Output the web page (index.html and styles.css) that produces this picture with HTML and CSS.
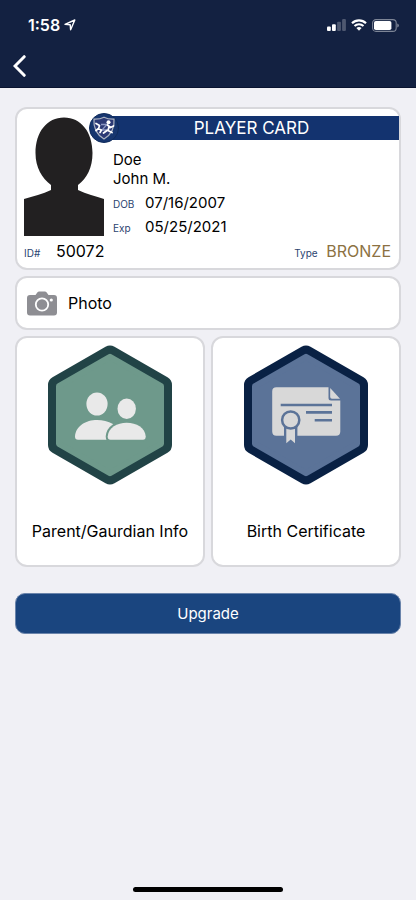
FILE: index.html
```html
<!DOCTYPE html>
<html lang="en">
    <head>
        <meta charset="UTF-8">
        <meta name="viewport" content="width=device-width, initial-scale=1.0">
        <title>Player Card</title>
        <link rel="stylesheet" href="styles.css">
    </head>
    <body>
        <header class="header">
            <div class="status-bar">
                <div class="clock">
                    <span>1:58</span>
                    <svg width="12" height="12" viewBox="0 0 12 12">
                        <path d="M1 5.4 L10.8 1 L6.6 10.8 L6.2 5.8 Z" fill="none" stroke="#fff" stroke-width="1.4" stroke-linejoin="round"/>
                    </svg>
                </div>
                <div class="status-icons">
                    <svg width="19" height="12" viewBox="0 0 19 12" fill="#fff">
                        <rect x="0" y="7.4" width="3.8" height="4.6" rx="1"/>
                        <rect x="5" y="5.2" width="3.8" height="6.8" rx="1"/>
                        <rect x="10.1" y="2.8" width="3.8" height="9.2" rx="1" opacity="0.25"/>
                        <rect x="15.1" y="0" width="3.8" height="12" rx="1" opacity="0.25"/>
                    </svg>
                    <svg width="16" height="12" viewBox="0 0 16 12">
                        <path d="M1 4.3 A10 10 0 0 1 15 4.3" fill="none" stroke="#fff" stroke-width="2.2"/>
                        <path d="M3.5 7 A6.4 6.4 0 0 1 12.5 7" fill="none" stroke="#fff" stroke-width="2"/>
                        <path d="M5.4 9.1 A3.8 3.8 0 0 1 10.6 9.1 L8 11.8 Z" fill="#fff"/>
                    </svg>
                    <svg width="27" height="13" viewBox="0 0 27 13">
                        <rect x="0.6" y="0.6" width="23.6" height="11.8" rx="3.4" fill="none" stroke="#fff" stroke-opacity="0.45" stroke-width="1.1"/>
                        <rect x="2" y="2" width="17.4" height="9" rx="1.8" fill="#fff"/>
                        <path d="M25.3 4.6 V8.6 Q26.8 8 26.8 6.6 Q26.8 5.2 25.3 4.6 Z" fill="#fff" opacity="0.5"/>
                    </svg>
                </div>
            </div>
            <button class="back-btn" aria-label="Back">
                <svg width="13" height="22" viewBox="0 0 13 22">
                    <path d="M11.2 1.7 L2 11 L11.2 20.3" fill="none" stroke="#fff" stroke-width="3" stroke-linecap="round"/>
                </svg>
            </button>
        </header>

        <main class="content">
            <section class="card player-card">
                <div class="player-top">
                    <svg class="player-photo" width="80" height="120" viewBox="0 0 80 120" fill="#222021">
                        <path d="M40 1.500 C57 1.500 68.500 16 68.500 37 C68.500 52 63 62 54 69 V74 C62 78 72 80 80 83 V120 H0 V83 C9 80 19 78 27 74 V69 C18 62 11.500 52 11.500 37 C11.500 16 23 1.500 40 1.500 Z"/>
                    </svg>
                    <div class="player-info">
                        <h1 class="banner">
                            <svg class="badge" width="30" height="30" viewBox="0 0 30 30">
                                <circle cx="15" cy="15" r="14.500" fill="#17366f" stroke="#102c5c"/>
                                <path d="M15 4.200 Q19 6.400 25 6.200 Q26.200 19 15 26 Q3.800 19 5 6.200 Q11 6.400 15 4.200 Z" fill="#2c3a75" stroke="#aeb4c2" stroke-width="1.200"/>
                                <path d="M12 11.500 H18 L13 17 H18" fill="none" stroke="#8d98c4" stroke-width="1.300"/>
                                <circle cx="19.500" cy="9.300" r="2" fill="#fff"/>
                                <path d="M18.500 12 L21.500 14.500 L24.500 13 M20 14 L19 17.500 L23 19.500 M18 17.500 L14.500 20" fill="none" stroke="#fff" stroke-width="1.800" stroke-linecap="round" stroke-linejoin="round"/>
                                <path d="M7 10.500 L10.500 12.500 L9.500 16 L12.500 17 L11 19.500 M9.500 15.500 L7 17.500" fill="none" stroke="#fff" stroke-width="1.700" stroke-linecap="round" stroke-linejoin="round"/>
                            </svg>
                            PLAYER CARD
                        </h1>
                        <div class="player-details">
                            <div class="name">Doe</div>
                            <div class="name">John M.</div>
                            <div class="dates">
                                <div class="field"><span class="label">DOB</span><span>07/16/2007</span></div>
                                <div class="field"><span class="label">Exp</span><span>05/25/2021</span></div>
                            </div>
                        </div>
                    </div>
                </div>
                <div class="player-bottom">
                    <div class="field"><span class="label">ID#</span><span>50072</span></div>
                    <div class="field"><span class="label">Type</span><span class="bronze">BRONZE</span></div>
                </div>
            </section>

            <button class="card photo-btn">
                <svg width="30" height="25" viewBox="0 0 30 25">
                    <path d="M3 4 H8.500 L10.500 1.200 Q11.200 0.500 12 0.500 H18 Q18.800 0.500 19.500 1.200 L21.500 4 H27 Q30 4 30 7 V21.500 Q30 24.500 27 24.500 H3 Q0 24.500 0 21.500 V7 Q0 4 3 4 Z" fill="#8e8e93"/>
                    <circle cx="15" cy="13.500" r="6.200" fill="none" stroke="#fff" stroke-width="1.800"/>
                    <circle cx="24.300" cy="9" r="1.600" fill="#fff"/>
                </svg>
                <span>Photo</span>
            </button>

            <div class="tiles">
                <a href="#" class="card tile">
                    <svg width="124" height="140" viewBox="0 0 124 140">
                        <path d="M62 9.500 L115 40 V100 L62 130.500 L9 100 V40 Z" fill="#214346" stroke="#214346" stroke-width="18" stroke-linejoin="round"/>
                        <path d="M62 11.800 L113 41.200 V98.800 L62 128.200 L11 98.800 V41.200 Z" fill="#6e998b" stroke="#6e998b" stroke-width="6" stroke-linejoin="round"/>
                        <g fill="#e9e9e9">
                            <ellipse cx="49" cy="59" rx="10.600" ry="11.600"/>
                            <path d="M30 94.700 Q27 94.700 27 91.500 C27.500 81 38 75 49 75 Q57.500 75 65 79 L75 94.700 Z"/>
                            <path d="M62.500 94.700 Q59.700 94.700 59.700 91.500 C60.500 82.500 69 77.700 78.700 77.700 C88.500 77.700 97 82.500 97.700 91.500 Q97.700 94.700 95 94.700 Z" stroke="#6e998b" stroke-width="4"/>
                            <path d="M62.500 94.700 Q59.700 94.700 59.700 91.500 C60.500 82.500 69 77.700 78.700 77.700 C88.500 77.700 97 82.500 97.700 91.500 Q97.700 94.700 95 94.700 Z"/>
                            <ellipse cx="78.700" cy="63.700" rx="9.200" ry="10.200"/>
                        </g>
                    </svg>
                    <span class="tile-title">Parent/Gaurdian Info</span>
                </a>
                <a href="#" class="card tile">
                    <svg width="124" height="140" viewBox="0 0 124 140">
                        <path d="M62 9.500 L115 40 V100 L62 130.500 L9 100 V40 Z" fill="#092144" stroke="#092144" stroke-width="18" stroke-linejoin="round"/>
                        <path d="M62 11.800 L113 41.200 V98.800 L62 128.200 L11 98.800 V41.200 Z" fill="#5b7398" stroke="#5b7398" stroke-width="6" stroke-linejoin="round"/>
                        <path d="M32.500 42.300 H84.500 V53 Q84.500 55.500 87 55.500 H96.300 V86.500 Q96.300 90.700 92 90.700 H32.500 Q28.200 90.700 28.200 86.500 V46.500 Q28.200 42.300 32.500 42.300 Z" fill="#d8d8d8"/>
                        <path d="M86.200 43 L96 53.800 H88 Q86.200 53.800 86.200 52 Z" fill="#d8d8d8"/>
                        <path d="M36.700 60 H88 M62 67.400 H88 M70.700 75.200 H88" stroke="#5b7398" stroke-width="2.600"/>
                        <path d="M40 80 H53.400 V92 H40 Z" fill="#5b7398"/>
                        <path d="M42.300 82 H51 V98.300 L46.700 94.500 L42.300 98.300 Z" fill="#d8d8d8"/>
                        <circle cx="46.700" cy="75" r="8.600" fill="#d8d8d8" stroke="#5b7398" stroke-width="2.500"/>
                    </svg>
                    <span class="tile-title">Birth Certificate</span>
                </a>
            </div>

            <button class="upgrade-btn">Upgrade</button>
        </main>

        <div class="home-indicator"></div>
    </body>
</html>
```
FILE: styles.css
```css
* {
    box-sizing: border-box;
}

body {
    margin: 0;
    min-height: 100vh;
    display: flex;
    flex-direction: column;
    background-color: #f0f0f5;
    color: #000;
    font-family: Inter, "Liberation Sans", sans-serif;
    font-size: 16px;
    line-height: 24px;
}

button {
    font: inherit;
    color: inherit;
    cursor: pointer;
}

svg {
    display: block;
    flex: none;
}

.header {
    height: 88px;
    padding: 13px 17px 0 13px;
    background-color: #132141;
    border-bottom: 1px solid #0a1430;
    color: #fff;
}

.status-bar {
    display: flex;
    justify-content: space-between;
    align-items: center;
    padding-left: 15px;
}

.clock {
    display: flex;
    align-items: center;
    gap: 4px;
    font-weight: 600;
}

.status-icons {
    display: flex;
    align-items: center;
    gap: 5px;
}

.back-btn {
    display: block;
    margin-top: 18px;
    padding: 0;
    border: none;
    background: none;
}

.content {
    display: flex;
    flex-direction: column;
    gap: 6px;
    padding: 19px 15px;
}

.card {
    background-color: #fff;
    border: 2px solid #d8d8dc;
    border-radius: 12px;
}

.player-card {
    padding: 7px 0 5px 7px;
}

.player-top {
    display: flex;
}

.player-info {
    flex: 1;
}

.banner {
    position: relative;
    margin: 0;
    background-color: #13336f;
    color: #fff;
    font-size: 17px;
    font-weight: 400;
    text-align: center;
}

/* sits over the photo and the left end of the banner */
.badge {
    position: absolute;
    left: -15px;
    top: -3px;
}

.player-details {
    padding: 10px 0 0 9px;
    font-size: 15px;
}

.name {
    line-height: 19px;
}

.dates {
    padding-top: 3px;
}

.field {
    display: flex;
    align-items: baseline;
    height: 24px;
}

.label {
    min-width: 32px;
    color: #2c4470;
    font-size: 10px;
    line-height: 16px;
}

.player-bottom {
    display: flex;
    justify-content: space-between;
    padding-right: 8px;
}

.bronze {
    color: #8c7142;
}

.photo-btn {
    display: flex;
    align-items: center;
    gap: 11px;
    height: 54px;
    padding: 0 10px;
}

.tiles {
    display: grid;
    grid-template-columns: 1fr 1fr;
    gap: 6px;
}

.tile {
    display: flex;
    flex-direction: column;
    align-items: center;
    gap: 34px;
    padding: 7px 0 22px;
    color: inherit;
    text-decoration: none;
}

.upgrade-btn {
    height: 41px;
    margin-top: 20px;
    border: 1px solid #6a84ab;
    border-radius: 10px;
    background-color: #1a457f;
    color: #fff;
    font-size: 15px;
}

.home-indicator {
    width: 36%;
    height: 5px;
    margin: auto auto 8px;
    border-radius: 3px;
    background-color: #000;
}
```
